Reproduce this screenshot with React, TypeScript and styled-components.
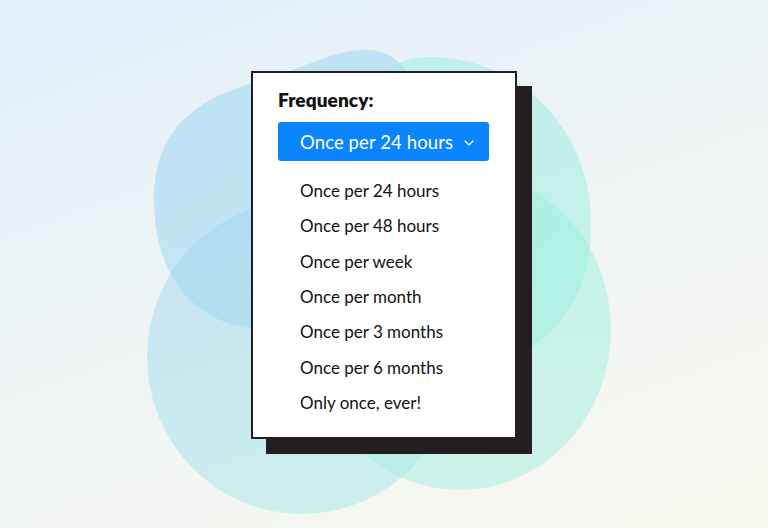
import React from "react";
import styled, { createGlobalStyle } from "styled-components";

const GlobalStyle = createGlobalStyle`
  html, body { margin: 0; padding: 0; }
  body { font-family: Lato, "Noto Sans", sans-serif; }
`;

const Page = styled.div`
  position: relative;
  width: 768px;
  height: 528px;
  overflow: hidden;
  background: linear-gradient(160deg, #e1f0fb 0%, #eef4f5 45%, #f9f8f0 100%);
  display: flex;
  justify-content: center;
  align-items: flex-start;
  padding-top: 71px;
  box-sizing: border-box;
`;

const Blobs = styled.svg`
  position: absolute;
  inset: 0;
  width: 768px;
  height: 528px;
`;

const Card = styled.div`
  position: relative;
  width: 266px;
  height: 368px;
  box-sizing: border-box;
  background: #ffffff;
  border: 2px solid #231f20;
  box-shadow: 15px 15px 0 0 #231f20;
  padding: 15px 26px 0 25px;
  display: flex;
  flex-direction: column;
`;

const Label = styled.div`
  font-family: Lato, sans-serif;
  font-weight: 800;
  font-size: 19px;
  line-height: 24px;
  color: #111111;
  letter-spacing: 0.1px;
`;

const SelectButton = styled.div`
  margin-top: 10px;
  width: 211px;
  height: 39px;
  box-sizing: border-box;
  background: #0a85ff;
  border-radius: 3px;
  display: flex;
  align-items: center;
  gap: 11px;
  padding-left: 22px;
  color: #ffffff;
  font-family: Lato, sans-serif;
  font-size: 18.5px;
  letter-spacing: 0.1px;
`;

const Chevron = styled.svg`
  width: 10px;
  height: 6px;
  margin-top: 2px;
`;

const List = styled.ul`
  list-style: none;
  margin: 12px 0 0 0;
  padding: 0 0 0 22px;
`;

const Item = styled.li`
  height: 35.3px;
  display: flex;
  align-items: center;
  font-family: Lato, sans-serif;
  font-size: 17px;
  color: #111111;
  letter-spacing: 0;
`;

const options = [
  "Once per 24 hours",
  "Once per 48 hours",
  "Once per week",
  "Once per month",
  "Once per 3 months",
  "Once per 6 months",
  "Only once, ever!",
];

export default function App() {
  return (
    <>
      <GlobalStyle />
      <Page>
        <Blobs viewBox="0 0 768 528">
          <defs>
            <linearGradient id="gA" x1="0" y1="0" x2="1" y2="1">
              <stop offset="0" stopColor="#a2d5f4" />
              <stop offset="1" stopColor="#98d9f0" />
            </linearGradient>
            <linearGradient id="gC" x1="0" y1="0" x2="0.3" y2="1">
              <stop offset="0" stopColor="#a0d3f3" />
              <stop offset="1" stopColor="#a4e6e6" />
            </linearGradient>
            <linearGradient id="gB" x1="0" y1="0" x2="1" y2="1">
              <stop offset="0" stopColor="#9ce9e6" />
              <stop offset="1" stopColor="#9cf0dc" />
            </linearGradient>
            <linearGradient id="gD" x1="0" y1="0" x2="0" y2="1">
              <stop offset="0" stopColor="#9af0dc" />
              <stop offset="1" stopColor="#a4eee2" />
            </linearGradient>
          </defs>
          <path
            d="M360 50 C420 45 432 120 422 200 C412 290 330 335 255 329 C190 322 156 272 154 205 C152 125 200 98 262 80 C300 70 330 52 360 50 Z"
            fill="url(#gA)"
            opacity="0.55"
          />
          <path
            d="M425 57 C520 55 590 130 591 220 C592 290 565 325 525 352 C460 392 360 360 340 280 C320 200 340 60 425 57 Z"
            fill="url(#gB)"
            opacity="0.52"
          />
          <ellipse cx="302" cy="357" rx="155" ry="157" fill="url(#gC)" opacity="0.5" />
          <ellipse cx="460" cy="330" rx="151" ry="160" fill="url(#gD)" opacity="0.5" />
        </Blobs>
        <Card>
          <Label>Frequency:</Label>
          <SelectButton>
            <span>Once per 24 hours</span>
            <Chevron viewBox="0 0 10 6">
              <path d="M1 1 L5 5 L9 1" fill="none" stroke="#ffffff" strokeWidth="1.4" strokeLinecap="round" strokeLinejoin="round" />
            </Chevron>
          </SelectButton>
          <List>
            {options.map((o) => (
              <Item key={o}>{o}</Item>
            ))}
          </List>
        </Card>
      </Page>
    </>
  );
}
